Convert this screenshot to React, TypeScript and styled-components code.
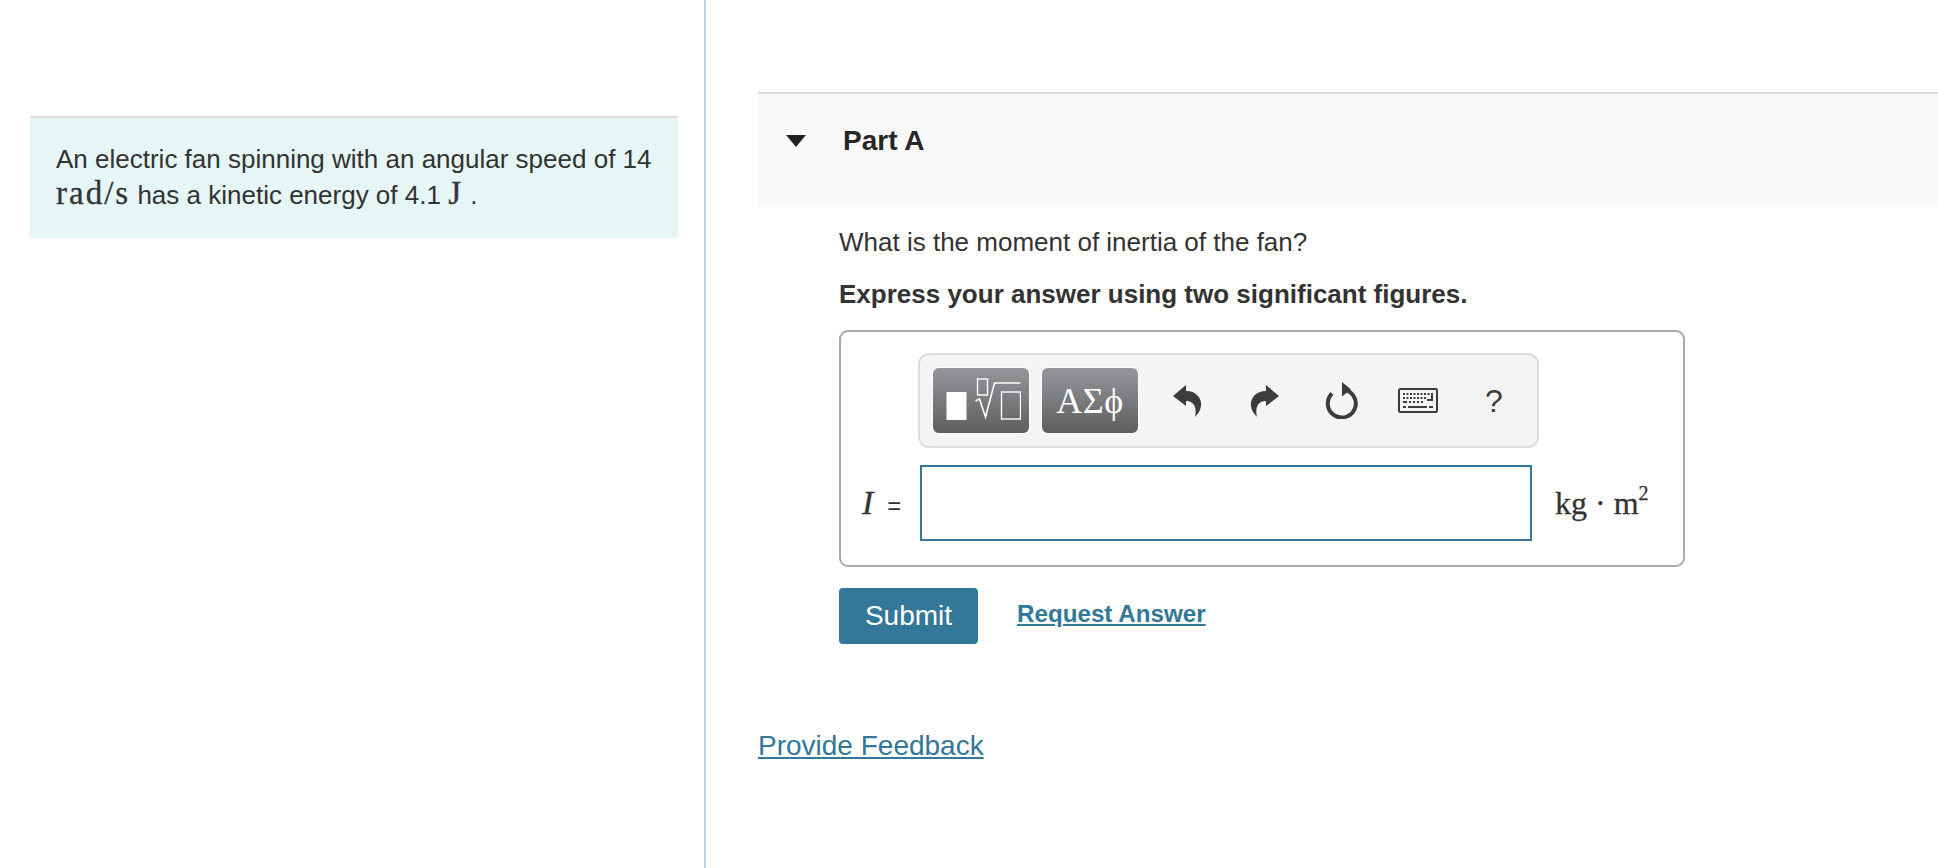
import React from "react";
import styled, { createGlobalStyle } from "styled-components";

const Global = createGlobalStyle`
  html, body { margin: 0; padding: 0; background: #fff; }
  body { font-family: "Liberation Sans", Arial, sans-serif; color: #333; overflow: hidden; }
`;

const Page = styled.div`
  display: flex;
  width: 1938px;
  height: 868px;
  overflow: hidden;
`;

const LeftPane = styled.aside`
  box-sizing: border-box;
  width: 706px;
  flex: none;
  height: 100%;
  padding: 116px 26px 0 30px;
  border-right: 2px solid #bccfe3;
`;

const Intro = styled.div`
  box-sizing: border-box;
  height: 122px;
  padding: 23px 26px 0;
  background: #e6f5f5;
  border-top: 2px solid #dddddd;
  font-size: 26px;
  line-height: 36px;
`;

const Math = styled.span`
  font-family: "Liberation Serif", "Times New Roman", serif;
  font-size: 33px;
  line-height: 0;
  letter-spacing: 2px;
  color: #333;
  -webkit-text-stroke: 0.3px #333;
`;

const RightPane = styled.main`
  flex: 1;
  min-width: 0;
  padding: 92px 0 0 52px;
`;

const PartHeader = styled.header`
  box-sizing: border-box;
  height: 115px;
  display: flex;
  align-items: flex-start;
  padding: 31px 0 0 28px;
  background: #f9f9f9;
  border-top: 2px solid #dddddd;
`;

const Caret = styled.span`
  width: 0;
  height: 0;
  margin: 10px 37px 0 0;
  border-left: 10.5px solid transparent;
  border-right: 10.5px solid transparent;
  border-top: 12px solid #222;
`;

const PartTitle = styled.h2`
  margin: 0;
  font-size: 28px;
  line-height: 32px;
  font-weight: 700;
  color: #262626;
`;

const PartBody = styled.section`
  padding: 17px 0 0 81px;
`;

const Question = styled.p`
  margin: 0;
  font-size: 26px;
  line-height: 36px;
`;

const Instruction = styled.p`
  margin: 16px 0 0;
  font-size: 26px;
  line-height: 36px;
  font-weight: 700;
`;

const AnswerBox = styled.div`
  box-sizing: border-box;
  width: 846px;
  height: 237px;
  margin-top: 18px;
  padding: 21px 0 0 77px;
  border: 2px solid #aaaaaa;
  border-radius: 9px;
`;

const Toolbar = styled.div`
  box-sizing: border-box;
  width: 621px;
  height: 95px;
  display: flex;
  align-items: center;
  padding-left: 12px;
  background: #f4f4f4;
  border: 2px solid #dddddd;
  border-radius: 11px;
`;

const TemplateButton = styled.button<{ $width: number }>`
  box-sizing: border-box;
  width: ${(p) => p.$width}px;
  height: 67px;
  margin-right: 11px;
  padding: 0;
  display: flex;
  align-items: center;
  justify-content: center;
  border: 1px solid #fff;
  border-radius: 7px;
  background: linear-gradient(#97969c, #5e5e5e);
  color: #fff;
`;

const Greek = styled.span`
  font-family: "Liberation Serif", serif;
  font-size: 36px;
  letter-spacing: 0.5px;
`;

const ToolIcon = styled.span<{ $left: number; $width: number }>`
  flex: none;
  width: ${(p) => p.$width}px;
  margin-left: ${(p) => p.$left}px;
  display: flex;
  justify-content: center;
  align-items: center;
  color: #3c3c3c;
  svg { display: block; }
`;

const Help = styled.span`
  flex: none;
  margin-left: 47px;
  font-size: 32px;
  line-height: 36px;
  color: #3c3c3c;
`;

const InputRow = styled.div`
  display: flex;
  align-items: center;
  margin: 17px 0 0 -56px;
`;

const Variable = styled.span`
  width: 58px;
  flex: none;
  white-space: nowrap;
  font-family: "Liberation Serif", serif;
  font-size: 34px;
  -webkit-text-stroke: 0.3px #333;
  i { margin-right: 14px; }
`;

const Equals = styled.span`
  font-family: "Liberation Sans", sans-serif;
  font-size: 24px;
  -webkit-text-stroke: 0;
`;

const AnswerInput = styled.input`
  box-sizing: border-box;
  width: 612px;
  height: 76px;
  flex: none;
  background: #fff;
  border: 2px solid #337799;
  outline: none;
`;

const Units = styled.span`
  margin-left: 23px;
  font-family: "Liberation Serif", serif;
  font-size: 32px;
  white-space: nowrap;
  -webkit-text-stroke: 0.3px #333;
  sup { font-size: 20px; line-height: 0; vertical-align: 14px; }
`;

const Actions = styled.div`
  display: flex;
  align-items: flex-start;
  margin-top: 21px;
`;

const SubmitButton = styled.button`
  width: 139px;
  height: 56px;
  padding: 0;
  border: 0;
  border-radius: 4px;
  background: #337799;
  color: #fff;
  font-family: "Liberation Sans", sans-serif;
  font-size: 28px;
`;

const RequestLink = styled.a`
  margin: 11px 0 0 39px;
  font-size: 24.2px;
  line-height: 30px;
  font-weight: 700;
  color: #337799;
  text-decoration: underline;
`;

const FeedbackLink = styled.a`
  display: inline-block;
  margin-top: 85px;
  font-size: 28px;
  line-height: 34px;
  color: #337799;
  text-decoration: underline;
`;

const RootIcon = () => (
  <svg width="80" height="46" viewBox="0 0 80 46" fill="none" aria-hidden="true">
    <rect x="5.500" y="14" width="20" height="28" fill="#fff" />
    <rect x="36.500" y="1" width="10" height="16" stroke="#fff" strokeWidth="1.4" />
    <path d="M34.500 23l4-2 6 18L53.500 5h26" stroke="#fff" strokeWidth="1.6" />
    <rect x="60.500" y="14" width="19" height="27" stroke="#fff" strokeWidth="1.4" />
  </svg>
);

const UndoIcon = () => (
  <svg width="29" height="32" viewBox="0 0 29 32" aria-hidden="true">
    <path d="M0 11L13 0V6C24 6 29 14 28 21C27.600 25 25 29 22 32C24 24 22 16 13 16V21Z" fill="currentColor" />
  </svg>
);

const RedoIcon = () => (
  <svg width="29" height="32" viewBox="0 0 29 32" aria-hidden="true">
    <path d="M29 11L16 0V6C5 6 0 14 1 21C1.400 25 4 29 7 32C5 24 7 16 16 16V21Z" fill="currentColor" />
  </svg>
);

const ReloadIcon = () => (
  <svg width="34" height="37" viewBox="0 0 34 37" aria-hidden="true">
    <path d="M17 7.500A14 14 0 1 1 7 11.500" fill="none" stroke="currentColor" strokeWidth="4" />
    <path d="M17 0l9 7.500-9 7z" fill="currentColor" />
  </svg>
);

const KeyboardIcon = () => (
  <svg width="40" height="25" viewBox="0 0 40 25" aria-hidden="true">
    <rect x="1" y="1" width="38" height="23" rx="1.500" fill="none" stroke="currentColor" strokeWidth="2" />
    <path
      d="M5 5h2v2H5zM8.500 5h2v2h-2zM12 5h2v2h-2zM15.500 5h2v2h-2zM19 5h2v2h-2zM22.500 5h2v2h-2zM26 5h2v2h-2zM29.500 5h2v2h-2zM5 9h2v2H5zM8.500 9h2v2h-2zM12 9h2v2h-2zM15.500 9h2v2h-2zM19 9h2v2h-2zM22.500 9h2v2h-2zM26 9h2v2h-2zM33 5h2v8h-6v-2h4zM5 13h4v2H5zM11 13h2v2h-2zM15 13h2v2h-2zM19 13h2v2h-2zM23 13h2v2h-2zM5 18h3v2H5zM10 18h19v2H10zM31 18h4v2h-4z"
      fill="currentColor"
    />
  </svg>
);

export default function App() {
  return (
    <>
      <Global />
      <Page>
        <LeftPane>
          <Intro>
            An electric fan spinning with an angular speed of 14 <Math>rad/s</Math> has a kinetic energy of 4.1 <Math>J</Math> .
          </Intro>
        </LeftPane>
        <RightPane>
          <PartHeader>
            <Caret />
            <PartTitle>Part A</PartTitle>
          </PartHeader>
          <PartBody>
            <Question>What is the moment of inertia of the fan?</Question>
            <Instruction>Express your answer using two significant figures.</Instruction>
            <AnswerBox>
              <Toolbar>
                <TemplateButton $width={98}><RootIcon /></TemplateButton>
                <TemplateButton $width={98}><Greek>ΑΣϕ</Greek></TemplateButton>
                <ToolIcon $left={23} $width={29}><UndoIcon /></ToolIcon>
                <ToolIcon $left={48} $width={29}><RedoIcon /></ToolIcon>
                <ToolIcon $left={46} $width={34}><ReloadIcon /></ToolIcon>
                <ToolIcon $left={39} $width={40}><KeyboardIcon /></ToolIcon>
                <Help>?</Help>
              </Toolbar>
              <InputRow>
                <Variable><i>I</i><Equals>=</Equals></Variable>
                <AnswerInput aria-label="I" />
                <Units>kg · m<sup>2</sup></Units>
              </InputRow>
            </AnswerBox>
            <Actions>
              <SubmitButton>Submit</SubmitButton>
              <RequestLink href="#">Request Answer</RequestLink>
            </Actions>
          </PartBody>
          <FeedbackLink href="#">Provide Feedback</FeedbackLink>
        </RightPane>
      </Page>
    </>
  );
}
